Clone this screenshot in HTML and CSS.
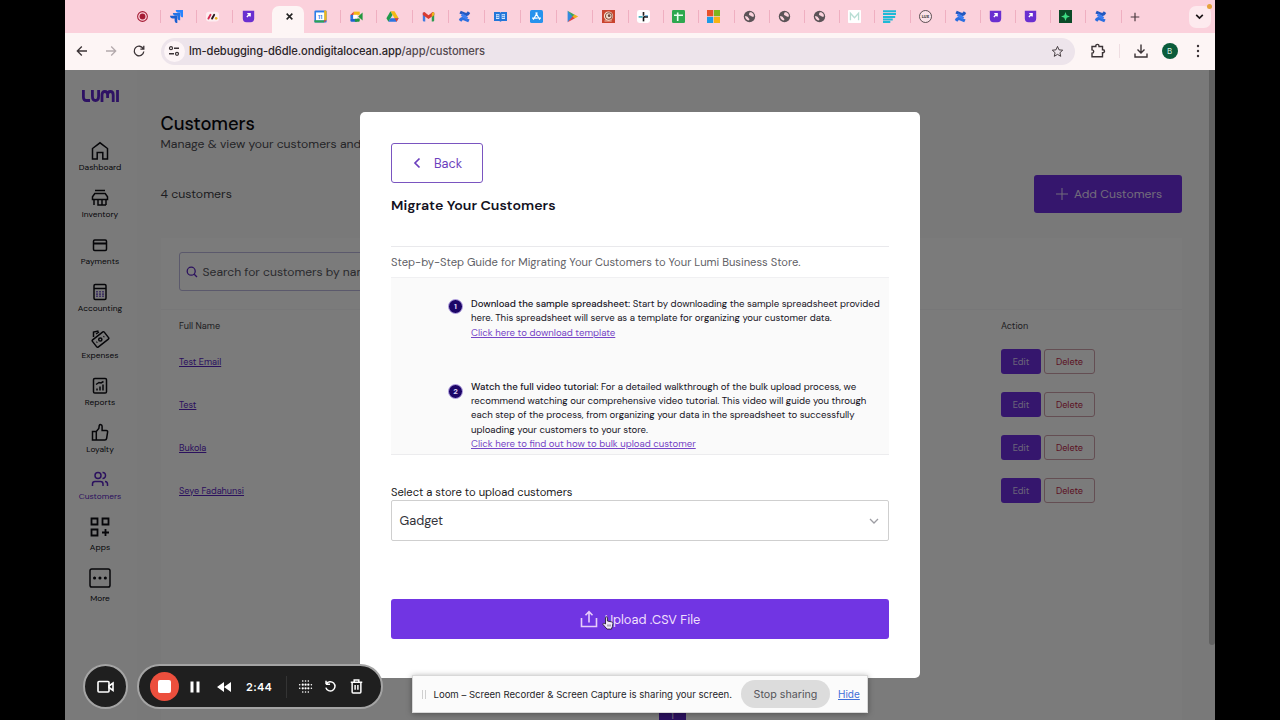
FILE: index.html
```html
<!DOCTYPE html>
<html lang="en">
<head>
  <meta charset="UTF-8">
  <meta name="viewport" content="width=device-width, initial-scale=1">
  <title>Customers - Lumi</title>
  <link rel="stylesheet" href="styles.css">
</head>
<body>
  <!-- shared icons -->
  <svg class="defs" width="0" height="0">
    <symbol id="confluence" viewBox="0 0 16 16">
      <path d="M1 12.2c1.800-3.600 4-4.300 7.500-2.700l5.800 2.300-1.700 3.400-5.200-2.300c-1.700-.8-2.400-.3-3.300 1.600z" fill="#2c6fe0"/>
      <path d="M15 3.800c-1.800 3.600-4 4.300-7.500 2.700L1.700 4.200 3.400.8l5.200 2.300c1.700.8 2.400.3 3.300-1.600z" fill="#2458c0"/>
      <path d="M4.500 5.500l7 5" stroke="#3b7df0" stroke-width="3.500"/>
    </symbol>
    <symbol id="lumi" viewBox="0 0 16 16">
      <path d="M1 1h14v9.500a4.500 4.500 0 0 1-4.500 4.500h-5A4.500 4.500 0 0 1 1 10.500z" fill="#6a2fd0"/>
      <path d="M6 8.500l3.500-3.500M6.500 4.500h3.500V8" fill="none" stroke="#fff" stroke-width="1.700"/>
    </symbol>
    <symbol id="globe" viewBox="0 0 16 16">
      <circle cx="8" cy="8" r="7" fill="#5b5357"/>
      <path d="M2.500 7.500c2 .2 3.500.8 4 2 .4 1 1.500 1 1.300 2.300-.1.800-.7 1-1.300 1.200-2.500-.8-4-2.800-4-5.500zM8 3c1.800-.6 3.500.2 4.600 1.700.8 1.300.9 2.500.7 3.300-1.300.8-2.700.5-3.300-.5-.5-1-2.500-.6-2.700-2C7.200 4.500 8 4 8 3z" fill="#fbd3dd"/>
    </symbol>
  </svg>

  <div class="screen">
    <div class="tabs">
      <div class="tab"><svg viewBox="0 0 16 16"><circle cx="8" cy="8" r="6" fill="none" stroke="#a51c34" stroke-width="1.300"/><circle cx="8" cy="8" r="3.600" fill="#a51c34"/></svg></div>
      <div class="tab"><svg viewBox="0 0 16 16"><path d="M7 0h9v9c-2 0-3.300-1.500-3.300-3.300V3.400h-2.400C8.500 3.400 7 2 7 0z" fill="#2684ff"/><path d="M3.500 3.700h9v9c-2 0-3.300-1.500-3.300-3.300V7H6.800C5 7 3.500 5.600 3.500 3.700z" fill="#2173e6"/><path d="M0 7.200h9v9c-2 0-3.300-1.500-3.300-3.300v-2.400H3.300C1.500 10.500 0 9.200 0 7.200z" fill="#1a5fd0"/></svg></div>
      <div class="tab"><svg viewBox="0 0 16 16"><rect y="2" width="16" height="12" rx="4" fill="#fdeef1"/><path d="M3 10.500l2.500-4.500" stroke="#d42a50" stroke-width="2.400" stroke-linecap="round"/><path d="M7.500 10.500L10 6" stroke="#241a1d" stroke-width="2.400" stroke-linecap="round"/><circle cx="12.500" cy="10.300" r="1.600" fill="#e8b21e"/></svg></div>
      <div class="tab plain"><svg><use href="#lumi"/></svg></div>
      <div class="tab active"><svg viewBox="0 0 16 16"><path d="M4.500 4.500l7 7M11.500 4.500l-7 7" stroke="#222" stroke-width="1.900"/></svg></div>
      <div class="tab"><svg viewBox="0 0 16 16"><rect x=".5" y=".5" width="15" height="15" rx="1.500" fill="#2b7de9"/><path d="M12.500 .5H14A1.500 1.500 0 0 1 15.500 2v10.500h-3z" fill="#f3b913"/><path d="M.5 12.500h12v3H2A1.500 1.500 0 0 1 .5 14z" fill="#2ea352"/><path d="M2.500 3h10v9.500h-10z" fill="#fff"/><path d="M12.500 12.500h3l-3 3z" fill="#e2452f"/><text x="7.600" y="10.500" font-size="7" font-weight="700" text-anchor="middle" fill="#2b7de9">11</text></svg></div>
      <div class="tab"><svg viewBox="0 0 16 16"><path d="M4.500 2H12v4H4.500z" fill="#f4b914"/><path d="M.5 6l4-4v4z" fill="#e2452f"/><path d="M.5 6h3.500v5H.5z" fill="#2870e0"/><path d="M.5 11h8v3.500H2A1.500 1.500 0 0 1 .5 13z" fill="#1e63cf"/><path d="M6 10.500h6v2.500a1.500 1.500 0 0 1-1.500 1.500H6zM10 8l5.500-5v10z" fill="#22963f"/><path d="M4 6h5v4.500H4z" fill="#fff"/></svg></div>
      <div class="tab"><svg viewBox="0 0 16 16"><path d="M5.500 1.500h5l5 8.500h-5z" fill="#f3b913"/><path d="M5.500 1.500L8 6 3 14.500.5 10z" fill="#219a4b"/><path d="M5.500 10h10L13 14.500H3z" fill="#2b74e2"/><path d="M13 14.500l2.500-4.500h-5z" fill="#e2452f"/></svg></div>
      <div class="tab"><svg viewBox="0 0 16 16"><path d="M1 3.500h3V14H2a1 1 0 0 1-1-1z" fill="#3f7be0"/><path d="M12 3.500h3V13a1 1 0 0 1-1 1h-2z" fill="#2d9b50"/><path d="M1 3.500L3 2.500l5 4 5-4 2 1v2.500L8 11 1 6z" fill="#da3b30"/><path d="M12 4l2-1.500 1 1V6l-3 2.500z" fill="#f0b51a"/></svg></div>
      <div class="tab"><svg><use href="#confluence"/></svg></div>
      <div class="tab"><svg viewBox="0 0 16 16"><path d="M0 2.500h7.200L8 3.300l.8-.8H16v11H9.500L8 14.500l-1.500-1H0z" fill="#2376d9"/><path d="M2.500 5h4v6h-4zM9.500 5h4v6h-4z" fill="#d8eaff"/><path d="M3 6.500h3M3 9h3M10 6.500h3M10 9h3" stroke="#2376d9" stroke-width="1.200"/></svg></div>
      <div class="tab"><svg viewBox="0 0 16 16"><rect width="16" height="16" rx="2" fill="#2692ed"/><path d="M9 3L4 12M7 3l5 9M2.500 10h7M11 10h2.500" stroke="#fff" stroke-width="1.500"/></svg></div>
      <div class="tab"><svg viewBox="0 0 16 16"><path d="M2 1l7 7-7 7z" fill="#328ae0"/><path d="M2 1l9 5-2.500 2.500z" fill="#3ca55c"/><path d="M2 15l9-5-2.500-2.500z" fill="#df3f47"/><path d="M10.500 5.500L15 8l-4.500 2.500L8 8z" fill="#eeb020"/></svg></div>
      <div class="tab"><svg viewBox="0 0 16 16"><rect width="16" height="16" fill="#c9432e"/><circle cx="8" cy="7.500" r="5.700" fill="#f4e0cf"/><circle cx="8.300" cy="7.500" r="4" fill="none" stroke="#8c4a3a" stroke-width="1.300"/><circle cx="8.800" cy="7" r="1.700" fill="#6d463c"/><path d="M3 13.500h9" stroke="#f4e0cf"/></svg></div>
      <div class="tab narrow"><svg viewBox="0 0 16 16"><rect width="16" height="16" rx="3" fill="#fff"/><path d="M8 2.500V7M8 8.500h5.500" stroke="#222" stroke-width="2"/><path d="M8 8.500V14" stroke="#111" stroke-width="2"/><path d="M2 8.500h5" stroke="#35a6b5" stroke-width="2"/><path d="M10 7h3.500" stroke="#69b7e2" stroke-width="1.500"/></svg></div>
      <div class="tab narrow"><svg viewBox="0 0 16 16"><rect width="16" height="16" rx="1.500" fill="#2ea84f"/><path d="M7 3v10.500M2.500 6.500h11" stroke="#e9fff0" stroke-width="2"/></svg></div>
      <div class="tab narrow"><svg viewBox="0 0 16 16"><path d="M0 0h7.600v7.600H0z" fill="#e8502a"/><path d="M8.400 0H16v7.600H8.400z" fill="#7db61c"/><path d="M0 8.400h7.600V16H0z" fill="#1f9ae6"/><path d="M8.400 8.400H16V16H8.400z" fill="#f6b312"/></svg></div>
      <div class="tab narrow"><svg><use href="#globe"/></svg></div>
      <div class="tab narrow"><svg><use href="#globe"/></svg></div>
      <div class="tab narrow"><svg><use href="#globe"/></svg></div>
      <div class="tab narrow"><svg viewBox="0 0 16 16"><rect width="16" height="16" rx="1" fill="#fff"/><path d="M3 12.500V4l5 5.500L13 4v8.500" fill="none" stroke="#b7ddd3" stroke-width="1.600"/></svg></div>
      <div class="tab narrow"><svg viewBox="0 0 16 16"><path d="M0 1.500h16M0 5h16M0 8.500h15M0 11.700h12M0 14.800h9" stroke="#1fb9d6" stroke-width="2.500"/></svg></div>
      <div class="tab narrow"><svg viewBox="0 0 16 16"><circle cx="8" cy="8" r="7.400" fill="#fbe1e7" stroke="#3a3235"/><text x="8" y="10" font-size="5" font-weight="700" text-anchor="middle" fill="#222">LUX</text></svg></div>
      <div class="tab narrow"><svg><use href="#confluence"/></svg></div>
      <div class="tab narrow"><svg><use href="#lumi"/></svg></div>
      <div class="tab narrow"><svg><use href="#lumi"/></svg></div>
      <div class="tab narrow"><svg viewBox="0 0 16 16"><path d="M0 0h16v16H0z" fill="#0b4a28"/><path d="M8 2.500L9.500 6.500l4 1.500-4 1.500L8 13.500 6.500 9.500l-4-1.500 4-1.500z" fill="#3ddc84"/></svg></div>
      <div class="tab narrow"><svg><use href="#confluence"/></svg></div>
      <svg class="new-tab" viewBox="0 0 10 10"><path d="M5 .7v8.600M.7 5h8.600" stroke="#4b3a40" stroke-width="1.200"/></svg>
      <div class="tab-list"><svg viewBox="0 0 10 10"><path d="M2 3.500l3 3 3-3" fill="none" stroke="#1d1619" stroke-width="1.500"/></svg></div>
      <i class="rec-dot"></i>
    </div>

    <div class="toolbar">
      <svg class="nav" viewBox="0 0 14 14"><path d="M12 7H2.500M6.800 2.500L2.300 7l4.500 4.500" stroke="#3b3336"/></svg>
      <svg class="nav" viewBox="0 0 14 14"><path d="M2 7h9.500M7.200 2.500L11.700 7l-4.500 4.500" stroke="#b3a9ac"/></svg>
      <svg class="nav" viewBox="0 0 14 14"><path d="M11.300 4.800A4.800 4.800 0 1 0 11.800 7.500M11.800 1.800v3.400H8.400" stroke="#3b3336"/></svg>
      <div class="omnibox">
        <span class="site-info"><svg viewBox="0 0 12 12"><path d="M6 3.200h5M1 8.800h5" stroke-width="1.400"/><circle cx="3" cy="3.200" r="1.500"/><circle cx="9" cy="8.800" r="1.500"/></svg></span>
        <span class="url">lm-debugging-d6dle.ondigitalocean.app<span>/app/customers</span></span>
        <svg class="star" viewBox="0 0 14 14"><path d="M7 1.500l1.600 3.700 4 .4-3 2.700.9 3.900L7 10.100l-3.500 2.100.9-3.900-3-2.700 4-.4z"/></svg>
      </div>
      <svg class="ext" viewBox="0 0 16 16"><path d="M2 3.500h3.800V3a1.600 1.600 0 0 1 3.200 0v.5h3.500v3.300h.5a1.500 1.500 0 0 1 0 3h-.5v4H2v-3.500a1.700 1.700 0 0 0 0-3.400z"/></svg>
      <i class="divider"></i>
      <svg class="download" viewBox="0 0 16 16"><path d="M8 1.500v8M4.500 6.500L8 10l3.500-3.500M2 10.500V14h12v-3.500"/></svg>
      <span class="avatar">B</span>
      <svg class="dots" viewBox="0 0 4 14"><circle cx="2" cy="2" r="1.200"/><circle cx="2" cy="7" r="1.200"/><circle cx="2" cy="12" r="1.200"/></svg>
    </div>

    <div class="app">
      <nav class="sidebar">
        <div class="logo"><svg viewBox="0 0 37 12"><path d="M1.400 0v7.200q0 3.300 3.200 3.300H8M10.400 0v6q0 4.500 3.100 4.500T16.600 6V0M20 12V5q0-3.500 2.800-3.500t2.800 3.300V8M25.600 4.800q0-3.300 2.800-3.300t2.800 3.500v7M35.500 0v12"/></svg></div>
        <a class="item"><svg viewBox="0 0 20 20"><path d="M2.500 18V7.500L10 1.800l7.500 5.700V18h-4.700v-6.500H7.200V18z"/></svg><span>Dashboard</span></a>
        <a class="item"><svg viewBox="0 0 20 20"><path d="M5 2.500h10M4.800 5.500h10.400l2.300 3.200v2.800h-15V8.700zM4 11.500V17M16 11.500V17M8 11.500V17h8M12 11.500V17"/></svg><span>Inventory</span></a>
        <a class="item"><svg viewBox="0 0 20 20"><rect x="3.500" y="5" width="13" height="10.500" rx="1.200"/><path d="M3.500 8.500h13" stroke-width="2"/></svg><span>Payments</span></a>
        <a class="item"><svg viewBox="0 0 20 20"><rect x="4" y="2.500" width="12" height="15" rx="1.200"/><path d="M4 6.500h12" /><path class="violet" d="M7 9v6M10 9v6M13 9v6" stroke-dasharray="1.600 .7"/></svg><span>Accounting</span></a>
        <a class="item"><svg viewBox="0 0 20 20"><rect x="3" y="6" width="15" height="9" rx="1" transform="rotate(-38 10.500 10.500)"/><circle cx="10.300" cy="10.500" r="1.600"/><path d="M3.500 8V3l5-1M6.500 13.500l.8-.6M13.500 8l.8-.6M6 5l3-2"/></svg><span>Expenses</span></a>
        <a class="item"><svg viewBox="0 0 20 20"><rect x="3.500" y="2.500" width="13" height="14.500" rx="1.300"/><path d="M7 14.500v-2M10 14.500v-4M13 14.500V8.500M6 8.500l3-2 2 .5 2.500-1.500"/></svg><span>Reports</span></a>
        <a class="item"><svg viewBox="0 0 20 20"><path d="M2.500 8.500h3.800V17H2.500zM6.300 8.500l2.500-3 .5-3.200c.6-1.200 2.800-.8 2.800 1v4.200h4.200c1 0 1.500.8 1.300 1.700l-1 6.300c-.2 1-.9 1.500-1.700 1.500H6.300"/></svg><span>Loyalty</span></a>
        <a class="item current"><svg viewBox="0 0 20 20"><circle cx="8" cy="5.500" r="3"/><path d="M12.500 2.500c4-.4 4 6.200 0 6M2.500 16v-2q0-2.500 2.500-2.500h5.500q2.500 0 2.500 2.500v2M15 11.500q2.500.2 2.500 2.500v2"/></svg><span>Customers</span></a>
        <a class="item tall"><svg viewBox="0 0 20 20"><path d="M1.500 1.500h6v6h-6zM12.500 1.500h6v6h-6zM1.500 12.500h6v6h-6zM15.500 12v7M12 15.500h7" stroke-width="1.800"/></svg><span>Apps</span></a>
        <a class="item tall"><svg class="wide" viewBox="0 0 22 20"><rect x="1" y="1" width="20" height="18" rx="1.800"/><path d="M5.500 10h11" stroke-width="3" stroke-linecap="round" stroke-dasharray=".1 5.300"/></svg><span>More</span></a>
      </nav>

      <main class="content">
        <h1>Customers</h1>
        <p class="subtitle">Manage &amp; view your customers and their details</p>
        <div class="summary">
          <span>4 customers</span>
          <button class="add"><svg viewBox="0 0 12 12"><path d="M6 0v12M0 6h12"/></svg>Add Customers</button>
        </div>
        <section class="card">
          <div class="search-row">
            <div class="search"><svg viewBox="0 0 12 12"><circle cx="5.200" cy="5.200" r="4"/><path d="M8.200 8.200L11 11"/></svg>Search for customers by name, email</div>
          </div>
          <div class="row head"><span>Full Name</span><span>Action</span></div>
          <div class="row"><a>Test Email</a><div class="actions"><button class="edit">Edit</button><button class="delete">Delete</button></div></div>
          <div class="row"><a>Test</a><div class="actions"><button class="edit">Edit</button><button class="delete">Delete</button></div></div>
          <div class="row"><a>Bukola</a><div class="actions"><button class="edit">Edit</button><button class="delete">Delete</button></div></div>
          <div class="row"><a>Seye Fadahunsi</a><div class="actions"><button class="edit">Edit</button><button class="delete">Delete</button></div></div>
          <div class="pager"><span>1</span></div>
        </section>
      </main>
      <div class="scrollbar"></div>

      <div class="overlay">
        <div class="modal">
          <button class="back"><svg viewBox="0 0 8 12"><path d="M6.500 1.500L2 6l4.500 4.500"/></svg>Back</button>
          <h2>Migrate Your Customers</h2>
          <p class="lead">Step-by-Step Guide for Migrating Your Customers to Your Lumi Business Store.</p>
          <div class="steps">
            <div class="step">
              <b class="num">1</b>
              <div>
                <p><strong>Download the sample spreadsheet:</strong> Start by downloading the sample spreadsheet provided</p>
                <p>here. This spreadsheet will serve as a template for organizing your customer data.</p>
                <a>Click here to download template</a>
              </div>
            </div>
            <div class="step second">
              <b class="num">2</b>
              <div>
                <p><strong>Watch the full video tutorial:</strong> For a detailed walkthrough of the bulk upload process, we</p>
                <p>recommend watching our comprehensive video tutorial. This video will guide you through</p>
                <p>each step of the process, from organizing your data in the spreadsheet to successfully</p>
                <p>uploading your customers to your store.</p>
                <a>Click here to find out how to bulk upload customer</a>
              </div>
            </div>
          </div>
          <label>Select a store to upload customers</label>
          <div class="select">Gadget<svg viewBox="0 0 10 6"><path d="M1 1l4 4 4-4"/></svg></div>
          <button class="upload"><svg viewBox="0 0 18 18"><path d="M1.500 8v8.500h15V8M9 12.500V2M5.500 5.200L9 1.700l3.500 3.500"/></svg>Upload .CSV File
            <svg class="pointer" viewBox="0 0 12 14"><path d="M3.500 8V1.800c0-1.300 1.900-1.300 1.900 0V5l4.200.9c1 .2 1.400.8 1.300 1.700l-.5 3-1 2.500H5L1 8.500c-.5-1 .8-1.500 1.500-.9z" fill="#f1e8fa" stroke="#2b2036" stroke-width=".9"/><path d="M6 8.500v2M8 8.500v2" stroke="#2b2036" stroke-width=".7"/></svg>
          </button>
        </div>
      </div>

      <div class="camera"><svg viewBox="0 0 18 14"><rect x="1" y="1.500" width="11" height="10.500" rx="1"/><path d="M12 6l4-3v7.500l-4-3z"/></svg></div>
      <div class="recorder">
        <span class="stop"><b></b></span>
        <svg class="pause" viewBox="0 0 12 12"><path d="M3 .5v11M9 .5v11"/></svg>
        <svg class="rewind" viewBox="0 0 14 10"><path d="M7 0v10L0 5zM14 0v10L7 5z"/></svg>
        <span class="time">2:44</span>
        <i></i>
        <svg class="blur" viewBox="0 0 14 14"><path d="M4 1h.1M7 1h.1M10 1h.1M4 13h.1M7 13h.1M10 13h.1M.7 5h.1M13.300 5h.1M.7 9h.1M13.300 9h.1"/><path d="M4 5h.1M7 5h.1M10 5h.1M4 9h.1M7 9h.1M10 9h.1" stroke-width="2.300"/></svg>
        <svg class="undo" viewBox="0 0 14 14"><path d="M2.200 4.500H6.500M2.200 4.500V.8M2.500 4.300A5 5 0 1 1 2 8.200"/></svg>
        <svg class="trash" viewBox="0 0 14 16"><path d="M.8 3.500h12.400M2.300 3.500V14q0 1 1 1h7.400q1 0 1-1V3.500M4.500 3.300V1h5v2.300M5.500 6.500v5M8.500 6.500v5"/></svg>
      </div>

      <div class="sharing">
        <i class="grip"></i>
        <span class="msg">Loom – Screen Recorder &amp; Screen Capture is sharing your screen.</span>
        <button>Stop sharing</button>
        <a>Hide</a>
      </div>
    </div>
  </div>
</body>
</html>
```

FILE: styles.css
```css
* {
  box-sizing: border-box;
}

body {
  margin: 0;
  background: #000;
  font-family: "DM Sans", Inter, sans-serif;
  overflow: hidden;
}

h1, h2, p {
  margin: 0;
}

button {
  font-family: inherit;
  padding: 0;
  border: 0;
}

svg {
  flex: none;
}

.defs {
  position: absolute;
}

.screen {
  width: 1150px;
  height: 720px;
  margin: 0 auto;
  background: #fdf5f5;
  overflow: hidden;
}

/* browser tabs */
.tabs {
  position: relative;
  display: flex;
  align-items: center;
  height: 33px;
  padding-left: 60px;
  background: #fbd1dc;
}

.tab {
  flex: none;
  display: flex;
  align-items: center;
  width: 36px;
  height: 13px;
  padding-left: 9px;
  border-right: 1px solid #efafc1;
}

.tab:first-child {
  padding-left: 11px;
}

.tab svg {
  width: 13px;
  height: 13px;
}

.tab.narrow {
  width: 35.2px;
  padding-left: 8px;
}

.tab.plain {
  border-color: transparent;
}

.tab.active {
  align-self: flex-end;
  height: 27px;
  width: 32px;
  margin: 0 1px 0 3px;
  padding: 0 0 6px 11px;
  border: 0;
  border-radius: 7px 7px 0 0;
  background: #fdf5f5;
}

.new-tab {
  width: 10px;
  height: 10px;
  margin-left: 8px;
}

.tab-list {
  display: flex;
  align-items: center;
  justify-content: center;
  width: 22px;
  height: 22px;
  margin-left: 49px;
  border-radius: 7px;
  background: #fdeaee;
}

.tab-list svg {
  width: 11px;
}

.rec-dot {
  position: absolute;
  right: 3px;
  top: 4px;
  width: 5px;
  height: 5px;
  border-radius: 50%;
  background: #e6a23c;
}

/* address bar */
.toolbar {
  display: flex;
  align-items: center;
  height: 37px;
  padding: 0 0 1px 10px;
  fill: none;
}

.nav {
  width: 14px;
  height: 14px;
  margin-right: 14.5px;
  stroke-width: 1.3;
}

.omnibox {
  display: flex;
  align-items: center;
  width: 914px;
  height: 27px;
  padding: 0 11px 0 3px;
  border-radius: 14px;
  background: #ede4eb;
}

.site-info {
  display: flex;
  align-items: center;
  justify-content: center;
  width: 21px;
  height: 21px;
  border-radius: 50%;
  background: #fdf5f7;
}

.site-info svg {
  width: 12px;
  stroke: #3b3336;
  stroke-width: 1.2;
}

.url {
  flex: 1;
  margin-left: 4.5px;
  font: 450 11.15px Inter, sans-serif;
  letter-spacing: -0.09px;
  color: #2b2428;
}

.url span {
  color: #54494f;
}

.star {
  width: 13px;
  stroke: #3b3336;
}

.ext, .download {
  width: 16px;
  height: 16px;
  margin-left: 15px;
  stroke: #3b3336;
  stroke-width: 1.4;
}

.divider {
  width: 1px;
  height: 14px;
  margin-left: 13px;
  background: #efdee2;
}

.download {
  margin-left: 13px;
}

.avatar {
  width: 16px;
  height: 16px;
  margin-left: 13px;
  border-radius: 50%;
  background: #0b5c3b;
  color: #d5eee2;
  font: 8px/16px Inter, sans-serif;
  text-align: center;
}

.dots {
  width: 4px;
  height: 14px;
  margin-left: 18.5px;
  fill: #3b3336;
}

/* page */
.app {
  position: relative;
  display: flex;
  height: 650px;
  background: #f3f3f3;
  overflow: hidden;
}

.sidebar {
  width: 72px;
  padding-top: 20px;
  background: #f5f5f5;
}

.logo {
  height: 51px;
  padding-left: 17px;
}

.logo svg {
  display: block;
  width: 37px;
  height: 12px;
  fill: none;
  stroke: #5c25c8;
  stroke-width: 2.8;
}

.item {
  display: flex;
  flex-direction: column;
  align-items: center;
  height: 47px;
  padding-right: 2px;
  color: #0c0c12;
  font-size: 8.4px;
  line-height: 14.5px;
}

.item svg {
  width: 20px;
  height: 20px;
  fill: none;
  stroke: currentColor;
  stroke-width: 1.5;
}

.item svg.wide {
  width: 22px;
}

.item .violet {
  stroke: #5b3bb5;
}

.item.current {
  color: #5723bd;
}

.item.tall {
  height: 51px;
}

.item.tall span {
  margin-top: 3.5px;
}

.content {
  width: 1045px;
  padding: 43px 0 0 23.5px;
}

h1 {
  font-size: 18.4px;
  font-weight: 550;
  line-height: 22px;
  letter-spacing: -0.1px;
  color: #07070d;
}

.subtitle {
  font-size: 12.2px;
  line-height: 18px;
  color: #4a4a50;
  white-space: nowrap;
}

.summary {
  display: flex;
  align-items: center;
  justify-content: space-between;
  height: 38px;
  margin-top: 22px;
  font-size: 12.3px;
  color: #3b3b42;
}

.add {
  display: flex;
  align-items: center;
  justify-content: center;
  gap: 6px;
  width: 148px;
  height: 38px;
  padding-left: 2px;
  border-radius: 3px;
  background: #6a2cdb;
  color: #e3d9f6;
  font-size: 12.2px;
}

.add svg {
  width: 12px;
  stroke: currentColor;
}

.card {
  height: 600px;
  margin-top: 25px;
  background: #f6f6f6;
}

.search-row {
  height: 72px;
  padding: 14px 18px;
  border-bottom: 1px solid #efeff1;
}

.search {
  display: flex;
  align-items: center;
  gap: 5px;
  width: 736px;
  height: 39px;
  padding-left: 6px;
  border: 1px solid #b7b2d8;
  border-radius: 3px;
  color: #55555c;
  font-size: 12.1px;
}

.search svg {
  width: 12px;
  fill: none;
  stroke: #5723bd;
  stroke-width: 1.3;
}

.row {
  display: grid;
  grid-template-columns: 822px 1fr;
  align-items: center;
  height: 43px;
  padding-left: 18.5px;
  font-size: 9.1px;
  color: #5723bd;
}

.row a {
  text-decoration: underline;
}

.row.head {
  height: 30px;
  padding-top: 1px;
  color: #3f3f46;
}

.actions {
  display: flex;
  gap: 3px;
}

.actions button {
  width: 40px;
  height: 25px;
  border-radius: 3px;
  background: #6a2cdb;
  color: #d9cbf2;
  font-size: 9.1px;
}

.actions .delete {
  width: 51px;
  border: 1px solid #c99da6;
  background: none;
  color: #b82345;
}

.pager {
  display: flex;
  justify-content: center;
  margin-top: 196px;
  padding-left: 2px;
}

.pager span {
  width: 27px;
  height: 25px;
  background: #5723bd;
  color: #e3d9f6;
  font-size: 10px;
  line-height: 16px;
  text-align: center;
}

.scrollbar {
  width: 6px;
  height: 575px;
  margin-left: auto;
  border-radius: 0 0 3px 3px;
  background: #c2c2c2;
}

/* dialog */
.overlay {
  position: absolute;
  inset: 0;
  padding-top: 42px;
  background: rgba(0, 0, 0, 0.5);
}

.modal {
  width: 560px;
  height: 566px;
  margin: 0 auto;
  padding: 31px;
  border-radius: 5px;
  background: #fff;
}

.back {
  display: flex;
  align-items: center;
  justify-content: center;
  gap: 13px;
  width: 92px;
  height: 40px;
  padding-left: 1px;
  border: 1px solid #7a55c0;
  border-radius: 3px;
  background: #fff;
  color: #6b3fbd;
  font-size: 12.7px;
}

.back svg {
  width: 8px;
  fill: none;
  stroke: currentColor;
  stroke-width: 1.7;
}

h2 {
  height: 64px;
  padding-top: 12px;
  border-bottom: 1px solid #e9e9ec;
  font-size: 14.2px;
  font-weight: 570;
  line-height: 20px;
  color: #13111e;
}

.lead {
  height: 30px;
  font-size: 11.2px;
  line-height: 30px;
  color: #5f5f66;
  white-space: nowrap;
}

.steps {
  height: 178px;
  padding: 19px 0 0 57px;
  border-top: 1px solid #f0f0f2;
  border-bottom: 1px solid #ececee;
  background: #fafafa;
  font-size: 9.6px;
  line-height: 14.4px;
  color: #15131d;
  white-space: nowrap;
}

.step {
  display: flex;
  gap: 8px;
  height: 82.5px;
}

.step a {
  color: #7645c6;
  text-decoration: underline;
}

.step strong {
  font-weight: 550;
}

.num {
  width: 15px;
  height: 15px;
  margin-top: 2px;
  border: 1px solid #b9a8e6;
  border-radius: 50%;
  background: #1c0567;
  color: #d9d0f2;
  font-size: 8px;
  line-height: 13px;
  text-align: center;
}

.second .num {
  margin-top: 4.5px;
}

.modal label {
  display: block;
  margin-top: 29px;
  font-size: 11.2px;
  line-height: 16px;
  color: #1b1a22;
}

.select {
  display: flex;
  align-items: center;
  justify-content: space-between;
  height: 41px;
  padding: 0 9px 0 7.5px;
  border: 1px solid #cfcfcf;
  border-radius: 2px;
  font-size: 12.8px;
  color: #33333a;
}

.select svg {
  width: 10px;
  fill: none;
  stroke: #9d9da3;
  stroke-width: 1.3;
}

.upload {
  position: relative;
  display: flex;
  align-items: center;
  justify-content: center;
  gap: 7px;
  width: 498px;
  height: 40px;
  margin-top: 58px;
  border-radius: 3px;
  background: #7135e3;
  color: #efdffc;
  font-size: 12.8px;
}

.upload svg {
  width: 18px;
  fill: none;
  stroke: #e7cdfa;
  stroke-width: 1.6;
}

.upload .pointer {
  position: absolute;
  left: 211px;
  top: 17px;
  width: 12px;
}

/* screen recorder */
.camera, .recorder {
  position: absolute;
  top: 594px;
  display: flex;
  align-items: center;
  height: 45px;
  border: 2px solid #a4a4a4;
  border-radius: 23px;
  background: #1f1f1f;
  fill: none;
  stroke: #fff;
  stroke-width: 1.6;
}

.camera {
  left: 18px;
  justify-content: center;
  width: 45px;
}

.camera svg {
  width: 18px;
}

.recorder {
  left: 72px;
  width: 246px;
  padding-left: 11px;
}

.stop {
  display: flex;
  align-items: center;
  justify-content: center;
  width: 29px;
  height: 29px;
  border-radius: 50%;
  background: #ec4f3d;
}

.stop b {
  width: 13px;
  height: 13px;
  border-radius: 2px;
  background: #fff;
}

.pause {
  width: 12px;
  margin-left: 10px;
  stroke-width: 3;
}

.rewind {
  width: 14px;
  margin-left: 16px;
  fill: #fff;
  stroke: none;
}

.time {
  width: 28px;
  margin-left: 15px;
  color: #fff;
  font: 600 11px Inter, sans-serif;
  letter-spacing: 0.3px;
}

.recorder i {
  width: 1px;
  height: 22px;
  margin-left: 12px;
  background: #343434;
}

.blur {
  width: 13px;
  margin-left: 12px;
  stroke-width: 1.6;
  stroke-linecap: round;
  overflow: visible;
}

.undo {
  width: 13px;
  margin-left: 12px;
}

.trash {
  width: 13px;
  margin-left: 13px;
}

.sharing {
  position: absolute;
  left: 347px;
  top: 605px;
  display: flex;
  align-items: center;
  width: 456px;
  height: 38px;
  padding-left: 9px;
  border: 1px solid #d8d8d8;
  background: #fbfbfb;
  box-shadow: 0 1px 6px rgba(0, 0, 0, 0.35);
  font-family: Inter, sans-serif;
  font-size: 9.6px;
  color: #26262a;
}

.grip {
  width: 4px;
  height: 9px;
  border: solid #cfcfcf;
  border-width: 0 1px;
}

.msg {
  width: 300px;
  margin-left: 7.5px;
  letter-spacing: -0.02px;
  white-space: nowrap;
}

.sharing button {
  width: 89px;
  height: 28px;
  margin-left: 7.5px;
  border-radius: 14px;
  background: #dcdcdc;
  color: #55555a;
  font-size: 10.7px;
}

.sharing a {
  margin-left: 8px;
  color: #3f70d8;
  font-size: 10px;
  text-decoration: underline;
}
```
